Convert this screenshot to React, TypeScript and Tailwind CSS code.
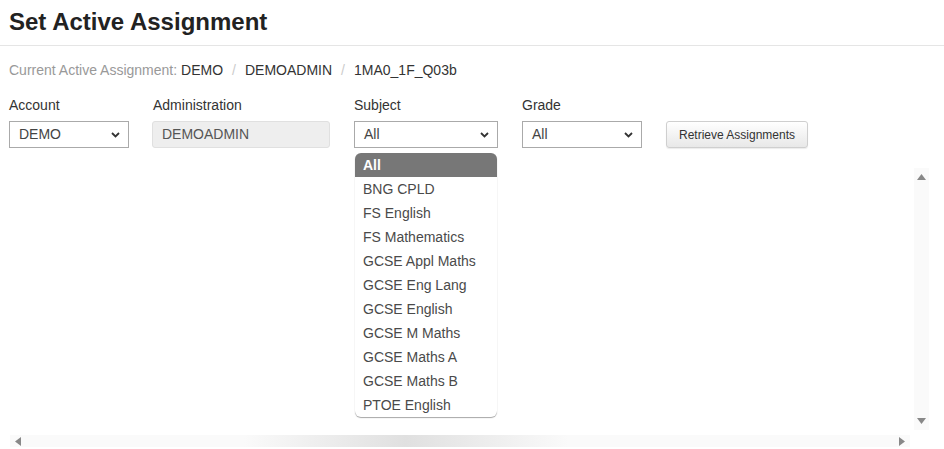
import React from "react";

const Chevron = () => (
  <svg width="9" height="6" viewBox="0 0 9 6" className="shrink-0">
    <path d="M1 1 L4.5 4.5 L8 1" fill="none" stroke="#333" strokeWidth="1.8" />
  </svg>
);

const SelectBox = ({ value, width }: { value: string; width: string }) => (
  <div
    className={`${width} h-[27px] border border-[#aaaaaa] bg-white flex items-center justify-between pl-[9px] pr-[8px] text-[14px] text-[#444]`}
  >
    <span>{value}</span>
    <Chevron />
  </div>
);

const items = [
  "BNG CPLD",
  "FS English",
  "FS Mathematics",
  "GCSE Appl Maths",
  "GCSE Eng Lang",
  "GCSE English",
  "GCSE M Maths",
  "GCSE Maths A",
  "GCSE Maths B",
  "PTOE English",
];

export default function App() {
  return (
    <div
      className="relative w-[944px] h-[449px] bg-white overflow-hidden text-[#333]"
      style={{ fontFamily: '"Liberation Sans", Arial, sans-serif' }}
    >
      <div className="h-[46px] border-b border-[#e5e5e5] flex items-center px-[9px]">
        <h1 className="text-[24px] font-bold text-[#222] leading-none -mt-[2px]">Set Active Assignment</h1>
      </div>

      <div className="pt-[14px] px-[9px] text-[14px] leading-[20px] flex">
        <span className="text-[#999]">Current Active Assignment:</span>
        <span className="ml-[4px]">DEMO</span>
        <span className="text-[#ccc] px-[9px]">/</span>
        <span>DEMOADMIN</span>
        <span className="text-[#ccc] px-[9px]">/</span>
        <span>1MA0_1F_Q03b</span>
      </div>

      <div className="mt-[15px] px-[9px] flex items-end text-[14px]">
        <div className="flex flex-col w-[143px]">
          <span className="leading-[20px] mb-[6px]">Account</span>
          <SelectBox value="DEMO" width="w-[120px]" />
        </div>
        <div className="flex flex-col w-[202px]">
          <span className="leading-[20px] mb-[6px] ml-[1px]">Administration</span>
          <div className="w-[178px] h-[27px] bg-[#eeeeee] border border-[#e0e0e0] rounded-[3px] pl-[9px] pt-[3px] text-[14px] text-[#555] leading-[18px]">
            DEMOADMIN
          </div>
        </div>
        <div className="flex flex-col w-[168px]">
          <span className="leading-[20px] mb-[6px]">Subject</span>
          <SelectBox value="All" width="w-[144px]" />
        </div>
        <div className="flex flex-col w-[144px]">
          <span className="leading-[20px] mb-[6px]">Grade</span>
          <SelectBox value="All" width="w-[120px]" />
        </div>
        <button className="w-[142px] h-[27px] border border-[#cfcfcf] rounded-[3px] bg-gradient-to-b from-white to-[#e8e8e8] text-[12px] text-[#333] shadow-[0_1px_1px_rgba(0,0,0,0.08)]">
          Retrieve Assignments
        </button>
      </div>

      {/* content region with scrollbars */}
      <div className="mt-[20px] flex h-[262px]">
        <div className="w-[914px]" />
        <div className="w-[15px] bg-[#fafafa] flex flex-col items-center justify-between py-[6px]">
          <svg width="9" height="6" viewBox="0 0 9 6"><path d="M4.5 0 L9 6 L0 6 Z" fill="#888" /></svg>
          <svg width="9" height="6" viewBox="0 0 9 6"><path d="M0 0 L9 0 L4.5 6 Z" fill="#888" /></svg>
        </div>
      </div>
      <div className="mt-[5px] mx-[10px] w-[900px] h-[12px] flex items-center justify-between px-[5px] bg-[linear-gradient(to_right,#fafafa_26%,#e0e0e0_44%,#fafafa_62%)]">
        <svg width="6" height="9" viewBox="0 0 6 9"><path d="M6 0 L6 9 L0 4.5 Z" fill="#888" /></svg>
        <svg width="6" height="9" viewBox="0 0 6 9"><path d="M0 0 L6 4.5 L0 9 Z" fill="#888" /></svg>
      </div>

      {/* dropdown overlay */}
      <div className="absolute left-[355px] top-[153px] w-[142px] bg-white rounded-[6px] shadow-[0_1px_1px_rgba(0,0,0,0.35)] text-[14px] text-[#4a4a4a] overflow-hidden">
        <div className="h-[24px] bg-[#777] text-white font-bold pl-[8px] flex items-center">All</div>
        {items.map((it) => (
          <div key={it} className="h-[24px] pl-[8px] flex items-center">
            {it}
          </div>
        ))}
      </div>
    </div>
  );
}
